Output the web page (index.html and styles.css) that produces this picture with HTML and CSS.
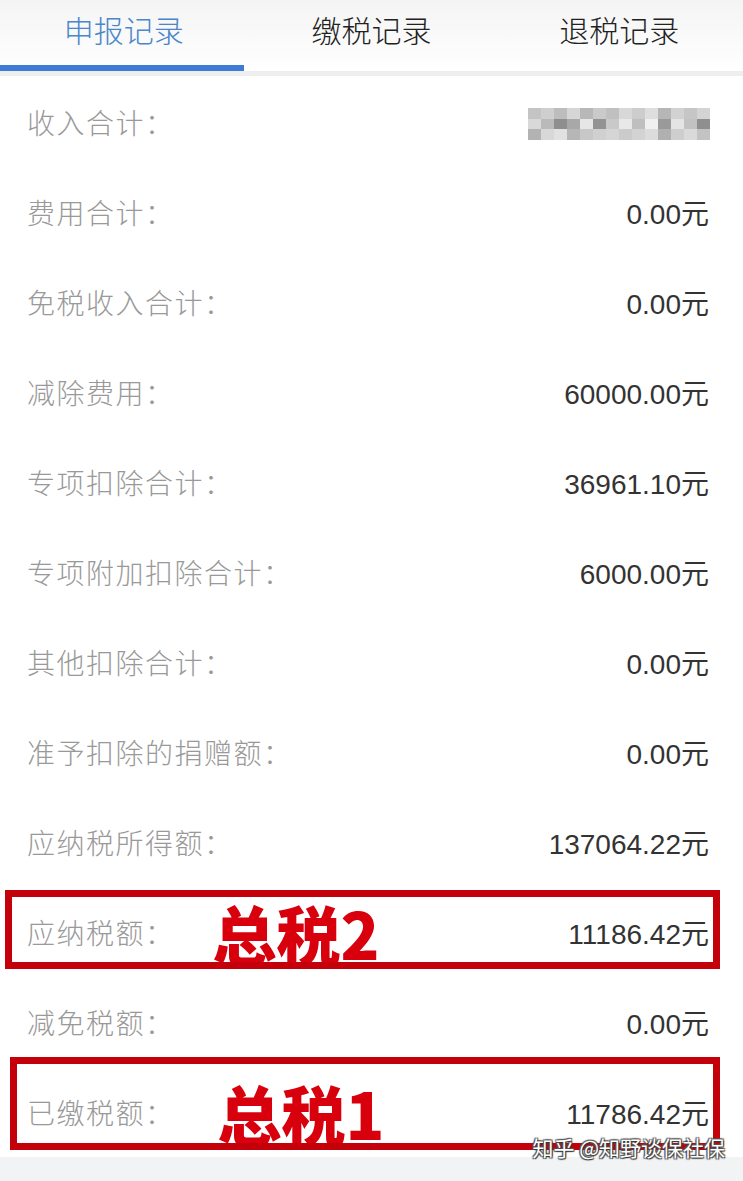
FILE: index.html
```html
<!DOCTYPE html>
<html lang="zh">
<head>
    <meta charset="utf-8">
    <title>申报记录</title>
    <link rel="stylesheet" href="styles.css">
</head>
<body>
<div class="page">
    <div class="tabs">
        <div class="tab active">申报记录</div>
        <div class="tab">缴税记录</div>
        <div class="tab">退税记录</div>
    </div>
    <div class="record-list">
        <div class="record-row">
            <span class="label">收入合计：</span>
            <svg class="mosaic" width="182" height="32" viewBox="0 0 182 32">
                <rect x="0" y="0" width="13" height="11" fill="#c4c4c4"/>
                <rect x="13" y="0" width="13" height="11" fill="#cfcfcf"/>
                <rect x="26" y="0" width="13" height="11" fill="#bdbdbd"/>
                <rect x="39" y="0" width="13" height="11" fill="#d6d6d6"/>
                <rect x="52" y="0" width="13" height="11" fill="#b8b8b8"/>
                <rect x="65" y="0" width="13" height="11" fill="#cacaca"/>
                <rect x="78" y="0" width="13" height="11" fill="#c0c0c0"/>
                <rect x="91" y="0" width="13" height="11" fill="#d8d8d8"/>
                <rect x="104" y="0" width="13" height="11" fill="#cdcdcd"/>
                <rect x="117" y="0" width="13" height="11" fill="#dedede"/>
                <rect x="130" y="0" width="13" height="11" fill="#b6b6b6"/>
                <rect x="143" y="0" width="13" height="11" fill="#d2d2d2"/>
                <rect x="156" y="0" width="13" height="11" fill="#c6c6c6"/>
                <rect x="169" y="0" width="13" height="11" fill="#d4d4d4"/>
                <rect x="0" y="11" width="13" height="10" fill="#d9d9d9"/>
                <rect x="13" y="11" width="13" height="10" fill="#bababa"/>
                <rect x="26" y="11" width="13" height="10" fill="#8e8e8e"/>
                <rect x="39" y="11" width="13" height="10" fill="#a8a8a8"/>
                <rect x="52" y="11" width="13" height="10" fill="#e6e6e6"/>
                <rect x="65" y="11" width="13" height="10" fill="#939393"/>
                <rect x="78" y="11" width="13" height="10" fill="#c9c9c9"/>
                <rect x="91" y="11" width="13" height="10" fill="#e8e8e8"/>
                <rect x="104" y="11" width="13" height="10" fill="#bfbfbf"/>
                <rect x="117" y="11" width="13" height="10" fill="#f0f0f0"/>
                <rect x="130" y="11" width="13" height="10" fill="#9a9a9a"/>
                <rect x="143" y="11" width="13" height="10" fill="#e4e4e4"/>
                <rect x="156" y="11" width="13" height="10" fill="#c2c2c2"/>
                <rect x="169" y="11" width="13" height="10" fill="#8f8f8f"/>
                <rect x="0" y="21" width="13" height="11" fill="#b3b3b3"/>
                <rect x="13" y="21" width="13" height="11" fill="#d8d8d8"/>
                <rect x="26" y="21" width="13" height="11" fill="#e1e1e1"/>
                <rect x="39" y="21" width="13" height="11" fill="#b6b6b6"/>
                <rect x="52" y="21" width="13" height="11" fill="#c8c8c8"/>
                <rect x="65" y="21" width="13" height="11" fill="#d0d0d0"/>
                <rect x="78" y="21" width="13" height="11" fill="#d5d5d5"/>
                <rect x="91" y="21" width="13" height="11" fill="#cbcbcb"/>
                <rect x="104" y="21" width="13" height="11" fill="#d3d3d3"/>
                <rect x="117" y="21" width="13" height="11" fill="#dcdcdc"/>
                <rect x="130" y="21" width="13" height="11" fill="#b0b0b0"/>
                <rect x="143" y="21" width="13" height="11" fill="#cecece"/>
                <rect x="156" y="21" width="13" height="11" fill="#dadada"/>
                <rect x="169" y="21" width="13" height="11" fill="#c3c3c3"/>
            </svg>
        </div>
        <div class="record-row">
            <span class="label">费用合计：</span>
            <span class="value">0.00元</span>
        </div>
        <div class="record-row">
            <span class="label">免税收入合计：</span>
            <span class="value">0.00元</span>
        </div>
        <div class="record-row">
            <span class="label">减除费用：</span>
            <span class="value">60000.00元</span>
        </div>
        <div class="record-row">
            <span class="label">专项扣除合计：</span>
            <span class="value">36961.10元</span>
        </div>
        <div class="record-row">
            <span class="label">专项附加扣除合计：</span>
            <span class="value">6000.00元</span>
        </div>
        <div class="record-row">
            <span class="label">其他扣除合计：</span>
            <span class="value">0.00元</span>
        </div>
        <div class="record-row">
            <span class="label">准予扣除的捐赠额：</span>
            <span class="value">0.00元</span>
        </div>
        <div class="record-row">
            <span class="label">应纳税所得额：</span>
            <span class="value">137064.22元</span>
        </div>
        <div class="record-row marked marked-first">
            <span class="label">应纳税额：</span>
            <span class="mark-text">总税2</span>
            <span class="value">11186.42元</span>
        </div>
        <div class="record-row">
            <span class="label">减免税额：</span>
            <span class="value">0.00元</span>
        </div>
        <div class="record-row marked marked-second">
            <span class="label">已缴税额：</span>
            <span class="mark-text">总税1</span>
            <span class="value">11786.42元</span>
            <span class="watermark">知乎 @知野谈保社保</span>
        </div>
    </div>
    <div class="footer"></div>
</div>
</body>
</html>
```

FILE: styles.css
```css
body {
    margin: 0;
    background-color: #fff;
    font-family: "Noto Sans CJK SC", "Noto Sans", sans-serif;
}
.page {
    width: 743px;
    height: 1181px;
    overflow: hidden;
    display: flex;
    flex-direction: column;
}
.tabs {
    display: flex;
    height: 71px;
    background: linear-gradient(#f4f4f4, #fff);
    border-bottom: 5px solid #eeeeee;
}
.tab {
    flex: 1;
    position: relative;
    display: flex;
    justify-content: center;
    align-items: center;
    padding-bottom: 14px;
    box-sizing: border-box;
    font-size: 30px;
    font-weight: 300;
    color: #222;
}
.tab.active {
    color: #4a86c8;
}
.tab.active::after {
    content: "";
    position: absolute;
    left: 0;
    right: 4px;
    bottom: 0;
    height: 6px;
    background-color: #3d7bd6;
}
.record-list {
    padding-top: 1px;
    display: flex;
    flex-direction: column;
}
.record-row {
    height: 90px;
    display: flex;
    align-items: center;
    padding: 0 34px 0 27px;
    position: relative;
}
.label {
    font-size: 28px;
    font-weight: 300;
    letter-spacing: 1.5px;
    color: #999;
}
.value {
    margin-left: auto;
    font-family: "Liberation Sans", "Noto Sans CJK SC", sans-serif;
    font-size: 28px;
    color: #333;
}
.mosaic {
    margin-left: auto;
    margin-right: -1px;
    margin-top: 4px;
    filter: blur(0.6px);
}
.mark-text {
    margin-left: 38px;
    font-size: 64px;
    font-weight: 900;
    color: #d8000c;
    line-height: 1;
}
.marked::after {
    content: "";
    position: absolute;
    border: 7px solid #c4000a;
}
.marked-first::after {
    top: 3px;
    bottom: 8px;
    left: 5px;
    right: 23px;
}
.marked-second .mark-text {
    margin-left: 43px;
}
.marked-second::after {
    top: -10px;
    bottom: 7px;
    left: 10px;
    right: 23px;
}
.watermark {
    position: absolute;
    right: 18px;
    bottom: -5px;
    z-index: 1;
    font-size: 21px;
    color: #fff;
    text-shadow: 1px 1px 1px #333, -1px -1px 1px #555, 1px -1px 1px #555, -1px 1px 1px #555;
}
.footer {
    flex: 1;
    background-color: #f2f3f5;
}
```
